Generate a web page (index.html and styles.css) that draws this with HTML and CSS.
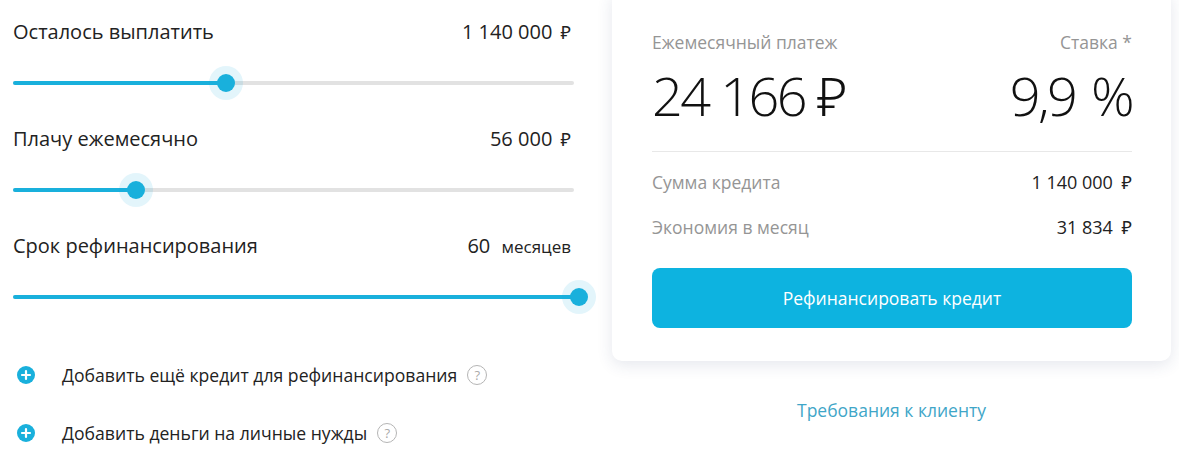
FILE: index.html
```html
<!DOCTYPE html>
<html lang="ru">
<head>
<meta charset="utf-8">
<link rel="stylesheet" href="styles.css">
</head>
<body>
<div class="page">
  <div class="controls">
    <div class="field">
      <div class="field-head"><span class="label">Осталось выплатить</span><span class="value">1 140 000 <span class="rub">₽</span></span></div>
      <div class="slider"><div class="track"><div class="fill" style="width: 38%"></div><div class="thumb" style="left: 38%"></div></div></div>
    </div>
    <div class="field">
      <div class="field-head"><span class="label">Плачу ежемесячно</span><span class="value">56 000 <span class="rub">₽</span></span></div>
      <div class="slider"><div class="track"><div class="fill" style="width: 22%"></div><div class="thumb" style="left: 22%"></div></div></div>
    </div>
    <div class="field">
      <div class="field-head"><span class="label">Срок рефинансирования</span><span class="value">60 <span class="unit">месяцев</span></span></div>
      <div class="slider"><div class="track"><div class="fill" style="width: 100%"></div><div class="thumb" style="left: calc(100% + 5px)"></div></div></div>
    </div>
    <div class="adds">
      <div class="add">
        <span class="plus"><svg width="18" height="18" viewBox="0 0 18 18"><circle cx="9" cy="9" r="9" fill="#19b0dc"/><path d="M9 5v8M5 9h8" stroke="#fff" stroke-width="2.2" stroke-linecap="round"/></svg></span>
        <span class="add-text">Добавить ещё кредит для рефинансирования</span>
        <span class="help">?</span>
      </div>
      <div class="add">
        <span class="plus"><svg width="18" height="18" viewBox="0 0 18 18"><circle cx="9" cy="9" r="9" fill="#19b0dc"/><path d="M9 5v8M5 9h8" stroke="#fff" stroke-width="2.2" stroke-linecap="round"/></svg></span>
        <span class="add-text">Добавить деньги на личные нужды</span>
        <span class="help">?</span>
      </div>
    </div>
  </div>
  <div class="side">
    <div class="card">
      <div class="card-head"><span class="muted">Ежемесячный платеж</span><span class="muted">Ставка *</span></div>
      <div class="card-big"><span>24 166 ₽</span><span class="rate">9,9 %</span></div>
      <div class="divider"></div>
      <div class="card-row"><span class="muted">Сумма кредита</span><span class="num">1 140 000 <span class="rub">₽</span></span></div>
      <div class="card-row"><span class="muted">Экономия в месяц</span><span class="num">31 834 <span class="rub">₽</span></span></div>
      <button class="btn">Рефинансировать кредит</button>
    </div>
    <a class="link" href="#">Требования к клиенту</a>
  </div>
</div>
</body>
</html>
```
FILE: styles.css
```css
* { box-sizing: border-box; }
html, body { margin: 0; padding: 0; background: #fff; }
body {
  font-family: "Open Sans", "Noto Sans", sans-serif;
  color: #222;
  width: 1179px;
  height: 457px;
  overflow: hidden;
}
.page {
  display: flex;
  align-items: flex-start;
  padding-left: 13px;
}
.controls {
  width: 561px;
  padding-top: 19px;
}
.field { margin-bottom: 26px; }
.field-head {
  display: flex;
  justify-content: space-between;
  align-items: center;
  height: 24px;
  font-size: 20px;
}
.value { padding-right: 3px; }
.rub { font-size: 18px; margin-left: 3px; }
.unit { font-size: 17px; margin-left: 6px; }
.slider {
  margin-top: 23px;
  height: 34px;
  display: flex;
  align-items: center;
}
.track {
  position: relative;
  width: 100%;
  height: 4px;
  border-radius: 2px;
  background: #e2e2e2;
}
.fill {
  height: 4px;
  border-radius: 2px;
  background: #19b0dc;
}
.thumb {
  position: absolute;
  top: 50%;
  width: 18px;
  height: 18px;
  margin: -9px 0 0 -9px;
  border-radius: 50%;
  background: #19b0dc;
  box-shadow: 0 0 0 8px rgba(25, 176, 220, 0.12);
}
.adds { padding-top: 20px; }
.add {
  display: flex;
  align-items: center;
  height: 30px;
  margin-bottom: 28px;
  font-size: 17.6px;
}
.plus { width: 18px; height: 18px; margin-left: 4px; margin-right: 27px; display: flex; }
.add-text { color: #222; }
.help {
  width: 20px;
  height: 20px;
  margin-left: 10px;
  border: 1px solid #b5b5b5;
  border-radius: 50%;
  color: #aaa;
  font-size: 13px;
  display: flex;
  align-items: center;
  justify-content: center;
}
.side {
  margin-left: 38px;
  width: 559px;
  display: flex;
  flex-direction: column;
  align-items: center;
}
.card {
  width: 559px;
  margin-top: -10px;
  padding: 41px 39px 33px 40px;
  background: #fff;
  border-radius: 10px;
  box-shadow: 0 4px 16px rgba(40, 60, 110, 0.12);
}
.card-head, .card-big, .card-row {
  display: flex;
  justify-content: space-between;
  align-items: center;
}
.card-head { height: 22px; font-size: 17.5px; }
.muted { color: #959595; }
.card-big {
  margin-top: 12px;
  height: 60px;
  font-size: 54px;
  font-weight: 300;
  color: #111;
  letter-spacing: -2.5px;
}
.rate { word-spacing: 4px; }
.divider {
  margin-top: 26px;
  height: 1px;
  background: #e8e8e8;
}
.card-row {
  height: 24px;
  margin-top: 18px;
  font-size: 17.5px;
}
.card-row + .card-row { margin-top: 21px; }
.num { color: #222; font-size: 18px; }
.num .rub { margin-left: 4px; }
.btn {
  display: block;
  width: 100%;
  height: 60px;
  margin-top: 29px;
  border: none;
  border-radius: 8px;
  background: #0db3e0;
  color: #fff;
  font-family: inherit;
  font-size: 17.5px;
  font-weight: 500;
}
.link {
  margin-top: 37px;
  line-height: 24px;
  font-size: 17.5px;
  color: #3fa6c8;
  text-decoration: none;
}
```
